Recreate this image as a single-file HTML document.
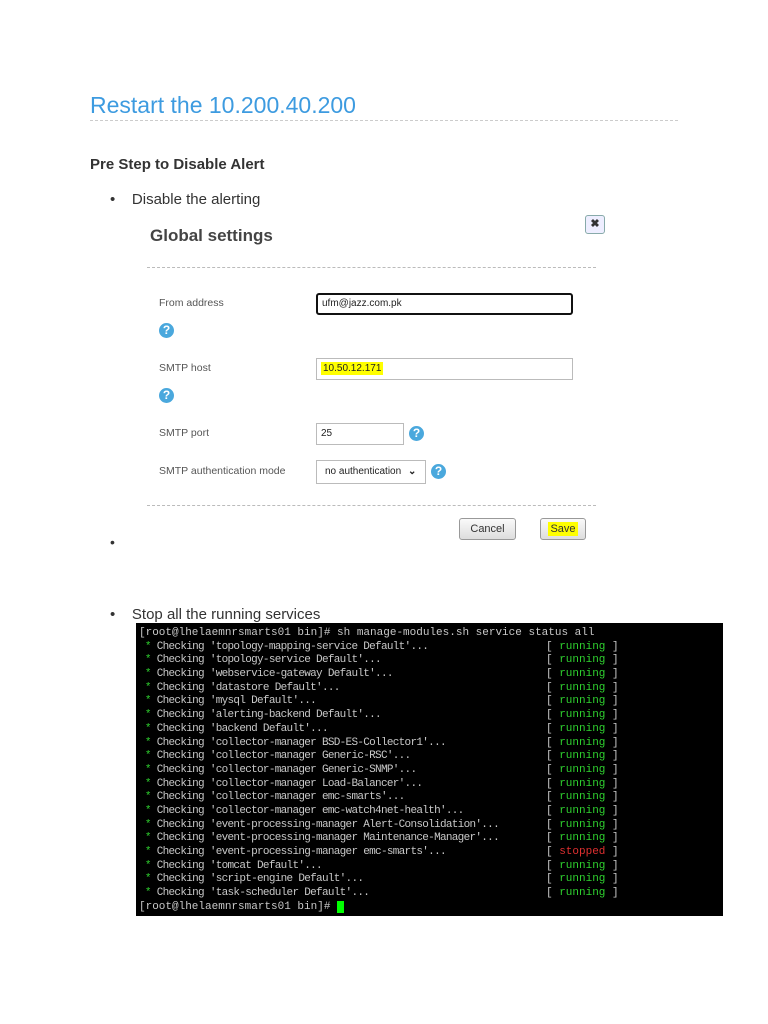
<!DOCTYPE html>
<html><head><meta charset="utf-8"><style>
body{margin:0;width:768px;height:1024px;background:#fff;font-family:"Liberation Sans",sans-serif;position:relative;overflow:hidden}
.a{position:absolute}
.lbl{font-size:10.5px;color:#555}
.q{position:absolute;width:15px;height:15px;border-radius:50%;background:#4aa8dd;color:#fff;font-weight:bold;font-size:12px;text-align:center;line-height:15px}
.inp{position:absolute;border:1px solid #bbb;background:#fff;font-size:10px;color:#222;box-sizing:border-box;padding-left:4px;line-height:19px}
.dash{position:absolute;left:147px;width:449px;border-top:1px dashed #bbb}
.btn{position:absolute;border:1px solid #999;border-radius:3px;background:linear-gradient(#fafafa,#ddd);font-size:11px;color:#333;text-align:center;line-height:20px;box-sizing:border-box}
.t{font-family:"Liberation Mono",monospace;font-size:11px;line-height:13.7px;color:#c8c8c8;white-space:pre;position:relative;height:13.7px;letter-spacing:-0.7px}
.t.p{letter-spacing:0}
.t i{font-style:normal;position:absolute;left:407px;letter-spacing:0}
.g{color:#2fd12f}.r{color:#e03030}.s{color:#2fd12f}
</style></head><body>
<div class="a" style="left:90px;top:92px;font-size:23px;color:#3d9be0">Restart the 10.200.40.200</div>
<div class="a" style="left:90px;top:120px;width:588px;border-top:1px dashed #ccc"></div>
<div class="a" style="left:90px;top:156px;font-size:15px;font-weight:bold;color:#333">Pre Step to Disable Alert</div>
<div class="a" style="left:110px;top:191px;font-size:15px;color:#333">•&nbsp;&nbsp;&nbsp;&nbsp;Disable the alerting</div>
<div class="a" style="left:150px;top:226px;font-size:17px;font-weight:bold;color:#444">Global settings</div>
<div class="a" style="left:585px;top:215px;width:18px;height:17px;border:1px solid #8aa;border-radius:3px;background:#eef;font-size:11px;text-align:center;line-height:17px;color:#333;font-weight:bold">✖</div>
<div class="dash" style="top:267px"></div>
<div class="a lbl" style="left:159px;top:297px">From address</div>
<div class="inp" style="left:316px;top:293px;width:257px;height:22px;border:2px solid #111;border-radius:3px;line-height:18px">ufm@jazz.com.pk</div>
<div class="q" style="left:159px;top:323px">?</div>
<div class="a lbl" style="left:159px;top:362px">SMTP host</div>
<div class="inp" style="left:316px;top:358px;width:257px;height:22px"><span style="background:#ffff00;padding:1px 2px">10.50.12.171</span></div>
<div class="q" style="left:159px;top:388px">?</div>
<div class="a lbl" style="left:159px;top:427px">SMTP port</div>
<div class="inp" style="left:316px;top:423px;width:88px;height:22px">25</div>
<div class="q" style="left:409px;top:426px">?</div>
<div class="a lbl" style="left:159px;top:465px">SMTP authentication mode</div>
<div class="inp" style="left:316px;top:460px;width:110px;height:24px;padding-left:8px;line-height:22px">no authentication <span style="font-weight:bold;margin-left:4px">⌄</span></div>
<div class="q" style="left:431px;top:464px">?</div>
<div class="dash" style="top:505px"></div>
<div class="btn" style="left:459px;top:518px;width:57px;height:22px">Cancel</div>
<div class="btn" style="left:540px;top:518px;width:46px;height:22px"><span style="background:#ffff00;padding:1px 2px">Save</span></div>
<div class="a" style="left:110px;top:534px;font-size:14px;color:#333">•</div>
<div class="a" style="left:110px;top:606px;font-size:15px;color:#333">•&nbsp;&nbsp;&nbsp;&nbsp;Stop all the running services</div>
<div class="a" style="left:136px;top:623px;width:587px;height:293px;background:#000;padding:4px 0 0 3px;box-sizing:border-box">
<div class="t p">[root@lhelaemnrsmarts01 bin]# sh manage-modules.sh service status all</div>
<div class="t"> <span class="s">*</span> Checking 'topology-mapping-service Default'...<i>[ <span class="g">running</span> ]</i></div>
<div class="t"> <span class="s">*</span> Checking 'topology-service Default'...<i>[ <span class="g">running</span> ]</i></div>
<div class="t"> <span class="s">*</span> Checking 'webservice-gateway Default'...<i>[ <span class="g">running</span> ]</i></div>
<div class="t"> <span class="s">*</span> Checking 'datastore Default'...<i>[ <span class="g">running</span> ]</i></div>
<div class="t"> <span class="s">*</span> Checking 'mysql Default'...<i>[ <span class="g">running</span> ]</i></div>
<div class="t"> <span class="s">*</span> Checking 'alerting-backend Default'...<i>[ <span class="g">running</span> ]</i></div>
<div class="t"> <span class="s">*</span> Checking 'backend Default'...<i>[ <span class="g">running</span> ]</i></div>
<div class="t"> <span class="s">*</span> Checking 'collector-manager BSD-ES-Collector1'...<i>[ <span class="g">running</span> ]</i></div>
<div class="t"> <span class="s">*</span> Checking 'collector-manager Generic-RSC'...<i>[ <span class="g">running</span> ]</i></div>
<div class="t"> <span class="s">*</span> Checking 'collector-manager Generic-SNMP'...<i>[ <span class="g">running</span> ]</i></div>
<div class="t"> <span class="s">*</span> Checking 'collector-manager Load-Balancer'...<i>[ <span class="g">running</span> ]</i></div>
<div class="t"> <span class="s">*</span> Checking 'collector-manager emc-smarts'...<i>[ <span class="g">running</span> ]</i></div>
<div class="t"> <span class="s">*</span> Checking 'collector-manager emc-watch4net-health'...<i>[ <span class="g">running</span> ]</i></div>
<div class="t"> <span class="s">*</span> Checking 'event-processing-manager Alert-Consolidation'...<i>[ <span class="g">running</span> ]</i></div>
<div class="t"> <span class="s">*</span> Checking 'event-processing-manager Maintenance-Manager'...<i>[ <span class="g">running</span> ]</i></div>
<div class="t"> <span class="s">*</span> Checking 'event-processing-manager emc-smarts'...<i>[ <span class="r">stopped</span> ]</i></div>
<div class="t"> <span class="s">*</span> Checking 'tomcat Default'...<i>[ <span class="g">running</span> ]</i></div>
<div class="t"> <span class="s">*</span> Checking 'script-engine Default'...<i>[ <span class="g">running</span> ]</i></div>
<div class="t"> <span class="s">*</span> Checking 'task-scheduler Default'...<i>[ <span class="g">running</span> ]</i></div>
<div class="t p">[root@lhelaemnrsmarts01 bin]# <span style="background:#00ff00">&nbsp;</span></div>
</div>
</body></html>
